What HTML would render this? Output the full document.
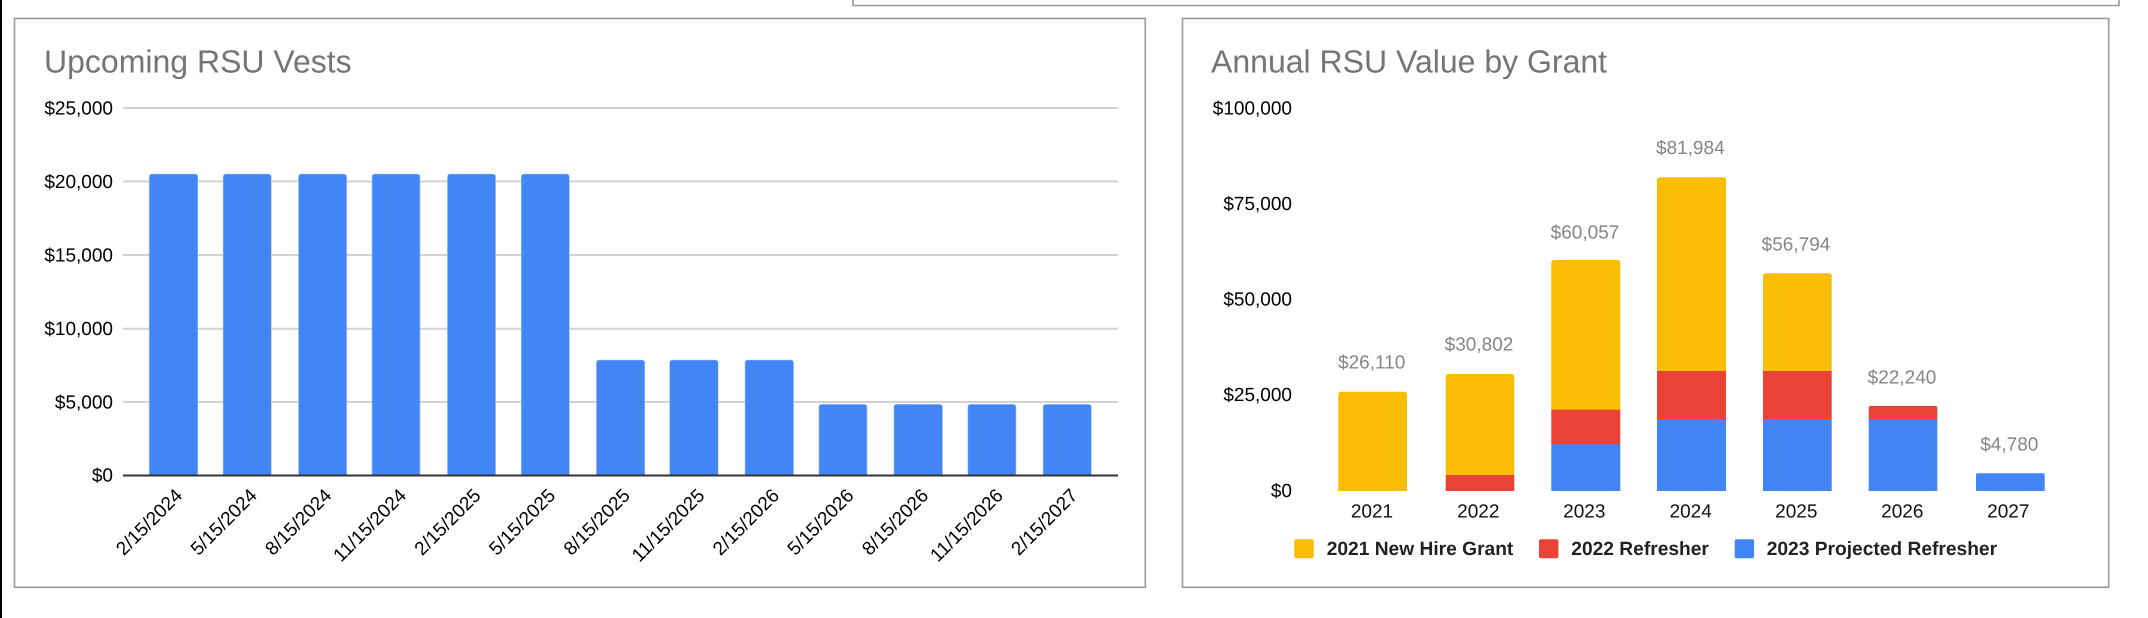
<!DOCTYPE html>
<html>
<head>
<meta charset="utf-8">
<style>
html,body{margin:0;padding:0;background:#fff;width:2148px;height:618px;overflow:hidden}
svg{display:block;filter:blur(.35px)}
text{font-family:"Liberation Sans",Arial,sans-serif;font-size:19px;fill:#000;text-rendering:geometricPrecision}
.t{font-size:32px;fill:#757575}
.d{fill:#858585;text-anchor:middle}
.m{text-anchor:middle;fill:#111}
.e{text-anchor:end}
.l{font-weight:bold;fill:#222;font-size:19.2px}
</style>
</head>
<body>
<svg width="2148" height="618" viewBox="0 0 2148 618" xmlns="http://www.w3.org/2000/svg">
<rect width="2148" height="618" fill="#fff"/>
<rect x="0" y="0" width="2" height="618" fill="#000"/>
<path d="M853 0V5.5H2119V0" fill="none" stroke="#9a9a9a" stroke-width="1.6"/>
<rect x="14.5" y="18.5" width="1130.8" height="568.8" fill="#fff" stroke="#9a9a9a" stroke-width="1.6"/>
<rect x="1182.5" y="18.5" width="926.2" height="568.8" fill="#fff" stroke="#9a9a9a" stroke-width="1.6"/>

<!-- Left chart -->
<text class="t" x="44" y="72.5">Upcoming RSU Vests</text>
<g stroke="#d2d2d2" stroke-width="2">
<path d="M123 108H1118M123 181.4H1118M123 255H1118M123 328.7H1118M123 402H1118"/>
</g>
<g class="e">
<text class="e" x="113" y="114.5">$25,000</text>
<text class="e" x="113" y="188">$20,000</text>
<text class="e" x="113" y="261.5">$15,000</text>
<text class="e" x="113" y="335">$10,000</text>
<text class="e" x="113" y="408.5">$5,000</text>
<text class="e" x="113" y="481.5">$0</text>
</g>
<g fill="#4285f4" stroke="#a9c6f8" stroke-width="0.6">
<path d="M149.2 475V177q0-3 3-3H194.800q3 0 3 3V475z"/>
<path d="M223.1 475V177q0-3 3-3H268.300q3 0 3 3V475z"/>
<path d="M298.5 475V177q0-3 3-3H343.700q3 0 3 3V475z"/>
<path d="M372 475V177q0-3 3-3H417q3 0 3 3V475z"/>
<path d="M447.4 475V177q0-3 3-3H492.600q3 0 3 3V475z"/>
<path d="M521.2 475V177q0-3 3-3H566.400q3 0 3 3V475z"/>
<path d="M596.4 475V363q0-3 3-3H641.800q3 0 3 3V475z"/>
<path d="M669.6 475V363q0-3 3-3H715.200q3 0 3 3V475z"/>
<path d="M745 475V363q0-3 3-3H790.600q3 0 3 3V475z"/>
<path d="M818.9 475V407.300q0-3 3-3H864q3 0 3 3V475z"/>
<path d="M893.9 475V407.300q0-3 3-3H939.500q3 0 3 3V475z"/>
<path d="M967.8 475V407.300q0-3 3-3H1013q3 0 3 3V475z"/>
<path d="M1043.1 475V407.300q0-3 3-3H1088.400q3 0 3 3V475z"/>
</g>
<path d="M123 475.500H1118" stroke="#333" stroke-width="2"/>
<text class="e" transform="rotate(-45 183.500 496.6)" x="183.5" y="496.6">2/15/2024</text>
<text class="e" transform="rotate(-45 258.100 496.6)" x="258.1" y="496.6">5/15/2024</text>
<text class="e" transform="rotate(-45 332.700 496.6)" x="332.7" y="496.6">8/15/2024</text>
<text class="e" transform="rotate(-45 407.300 496.6)" x="407.3" y="496.6">11/15/2024</text>
<text class="e" transform="rotate(-45 481.900 496.6)" x="481.9" y="496.6">2/15/2025</text>
<text class="e" transform="rotate(-45 556.500 496.6)" x="556.5" y="496.6">5/15/2025</text>
<text class="e" transform="rotate(-45 631.100 496.6)" x="631.1" y="496.6">8/15/2025</text>
<text class="e" transform="rotate(-45 705.700 496.6)" x="705.7" y="496.6">11/15/2025</text>
<text class="e" transform="rotate(-45 780.300 496.6)" x="780.3" y="496.6">2/15/2026</text>
<text class="e" transform="rotate(-45 854.900 496.6)" x="854.9" y="496.6">5/15/2026</text>
<text class="e" transform="rotate(-45 929.500 496.6)" x="929.5" y="496.6">8/15/2026</text>
<text class="e" transform="rotate(-45 1004.100 496.6)" x="1004.1" y="496.6">11/15/2026</text>
<text class="e" transform="rotate(-45 1078.700 496.6)" x="1078.7" y="496.6">2/15/2027</text>

<!-- Right chart -->
<text class="t" x="1211" y="72.5">Annual RSU Value by Grant</text>
<text class="e" x="1292" y="114.5">$100,000</text>
<text class="e" x="1292" y="210">$75,000</text>
<text class="e" x="1292" y="305.5">$50,000</text>
<text class="e" x="1292" y="401">$25,000</text>
<text class="e" x="1292" y="497">$0</text>

<g fill="#fbbc04">
<path d="M1338.300 491V394.700q0-3 3-3H1404q3 0 3 3V491z"/>
<path d="M1445.700 476V377q0-3 3-3H1511.300q3 0 3 3V476z"/>
<path d="M1551.300 410V263q0-3 3-3H1617.300q3 0 3 3V410z"/>
<path d="M1657 372V180.300q0-3 3-3H1723q3 0 3 3V372z"/>
<path d="M1763 372V276.300q0-3 3-3H1828.700q3 0 3 3V372z"/>
</g>
<g fill="#ea4335">
<rect x="1445.7" y="475" width="68.6" height="16"/>
<rect x="1551.3" y="409.7" width="69" height="35"/>
<rect x="1657" y="371" width="69" height="48.500"/>
<rect x="1763" y="371" width="68.700" height="48.500"/>
<path d="M1868.700 420V408q0-2 2-2H1935.300q2 0 2 2V420z"/>
</g>
<g fill="#4285f4">
<rect x="1551.3" y="444.3" width="69" height="46.700"/>
<rect x="1657" y="419" width="69" height="72"/>
<rect x="1763" y="419" width="68.700" height="72"/>
<rect x="1868.7" y="419" width="68.600" height="72"/>
<path d="M1976 491V475q0-1.700 1.700-1.700H2043q1.700 0 1.700 1.700V491z"/>
</g>

<text class="d" x="1371.7" y="368.300">$26,110</text>
<text class="d" x="1479" y="350.700">$30,802</text>
<text class="d" x="1585" y="238.300">$60,057</text>
<text class="d" x="1690.3" y="154">$81,984</text>
<text class="d" x="1796" y="250.700">$56,794</text>
<text class="d" x="1902" y="383.300">$22,240</text>
<text class="d" x="2009.3" y="450.300">$4,780</text>

<text class="m" x="1372" y="517.300">2021</text>
<text class="m" x="1478.3" y="517.300">2022</text>
<text class="m" x="1584.3" y="517.300">2023</text>
<text class="m" x="1690.7" y="517.300">2024</text>
<text class="m" x="1796.3" y="517.300">2025</text>
<text class="m" x="1902.3" y="517.300">2026</text>
<text class="m" x="2008.3" y="517.300">2027</text>

<rect x="1294.3" y="539.3" width="19.400" height="19" rx="2" fill="#fbbc04"/>
<rect x="1539" y="539.3" width="19.400" height="19" rx="2" fill="#ea4335"/>
<rect x="1734.7" y="539.3" width="19.400" height="19" rx="2" fill="#4285f4"/>
<text class="l" x="1326.7" y="555">2021 New Hire Grant</text>
<text class="l" x="1571.3" y="555">2022 Refresher</text>
<text class="l" x="1766.7" y="555">2023 Projected Refresher</text>
</svg>
</body>
</html>
